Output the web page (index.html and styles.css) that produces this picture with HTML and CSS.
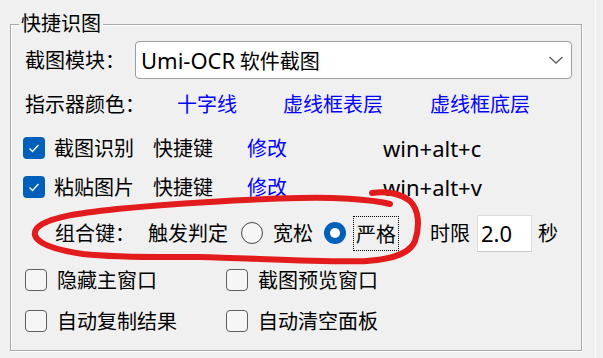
FILE: index.html
```html
<!DOCTYPE html>
<html lang="zh">
<head>
<meta charset="utf-8">
<link rel="stylesheet" href="styles.css">
</head>
<body>
<div class="page">
  <div class="main">
    <div class="group">
      <div class="legend">快捷识图</div>

      <div class="row r1">
        <span class="t lbl1">截图模块：</span>
        <div class="combo">
          <span class="t"><span class="latin">Umi-OCR</span> 软件截图</span>
          <svg class="chev" width="16" height="10" viewBox="0 0 16 10"><path d="M1.5 2 L8 8 L14.5 2" fill="none" stroke="#5f5f5f" stroke-width="1.4"/></svg>
        </div>
      </div>

      <div class="row r2">
        <span class="t c-ind">指示器颜色：</span>
        <span class="t link c-cross">十字线</span>
        <span class="t link c-top">虚线框表层</span>
        <span class="t link">虚线框底层</span>
      </div>

      <div class="row r3">
        <span class="cb on"><svg width="22" height="22" viewBox="0 0 22 22"><path d="M6.5 11.5 L9.5 14.5 L15.5 8" fill="none" stroke="#fff" stroke-width="1.3"/></svg></span>
        <span class="t c-name">截图识别</span>
        <span class="t c-key">快捷键</span>
        <span class="t link c-mod">修改</span>
        <span class="t latin">win+alt+c</span>
      </div>

      <div class="row r4">
        <span class="cb on"><svg width="22" height="22" viewBox="0 0 22 22"><path d="M6.5 11.5 L9.5 14.5 L15.5 8" fill="none" stroke="#fff" stroke-width="1.3"/></svg></span>
        <span class="t c-name">粘贴图片</span>
        <span class="t c-key">快捷键</span>
        <span class="t link c-mod">修改</span>
        <span class="t latin">win+alt+v</span>
      </div>

      <div class="row r5">
        <span class="t c-combo">组合键：</span>
        <span class="t c-trig">触发判定</span>
        <span class="radio"></span>
        <span class="t c-loose">宽松</span>
        <span class="radio sel"></span>
        <span class="focus t">严格</span>
        <span class="t c-limit">时限</span>
        <span class="input"><span class="latin">2.0</span></span>
        <span class="t c-sec">秒</span>
      </div>

      <div class="row r6">
        <span class="opt"><span class="cb"></span><span class="t">隐藏主窗口</span></span>
        <span class="opt"><span class="cb"></span><span class="t">截图预览窗口</span></span>
      </div>

      <div class="row r7">
        <span class="opt"><span class="cb"></span><span class="t">自动复制结果</span></span>
        <span class="opt"><span class="cb"></span><span class="t">自动清空面板</span></span>
      </div>
    </div>
  </div>
  <div class="strip"></div>

  <svg class="scribble" width="603" height="358" viewBox="0 0 603 358">
    <path d="M390 204 C370 199 330 197 300 198 C250 199 170 204 117 209 C80 213 48 217 37 228 C29 238 42 248 83 254 C120 258 170 257 200 257 C250 258 330 263 367 261 C395 259 410 253 415 241 C420 226 419 210 410 201 C400 193 385 191 372 193" fill="none" stroke="#e21c1c" stroke-width="6" stroke-linecap="round" stroke-linejoin="round"/>
  </svg>
</div>
</body>
</html>
```

FILE: styles.css
```css
html, body {
  margin: 0;
  padding: 0;
}

.page {
  position: relative;
  width: 603px;
  height: 358px;
  display: flex;
  overflow: hidden;
  background: #f0f0f0;
  font-family: "Noto Sans CJK SC", sans-serif;
  font-size: 20px;
  color: #000;
}

.main {
  width: 595px;
}

.strip {
  flex: 1;
  border-left: 1px solid #fafafa;
}

.group {
  position: relative;
  box-sizing: border-box;
  margin: 24px 0 0 10px;
  width: 572px;
  height: 327px;
  border: 1px solid #a9a9a9;
  box-shadow: inset 1px 1px 0 #fff, 1px 1px 0 #fff;
  padding-top: 16px;
}

.legend {
  position: absolute;
  left: 8px;
  top: -12px;
  padding: 0 2px;
  background: #f0f0f0;
  line-height: 20px;
}

.t {
  line-height: 20px;
  white-space: nowrap;
}

.latin {
  font-family: "Noto Sans", "Noto Sans CJK SC", sans-serif;
  font-size: 22px;
  line-height: 20px;
}

.link {
  color: #0000ff;
}

.row {
  display: flex;
  align-items: center;
  padding-left: 14px;
}

.r1 { height: 38px; }
.r2 { height: 50px; }
.r3 { height: 38px; padding-left: 12px; }
.r4 { height: 40px; padding-left: 12px; }
.r5 { height: 52px; padding-left: 44px; }
.r6 { height: 42px; }
.r7 { height: 40px; }

/* row 1 */
.lbl1 { width: 110px; }

.combo {
  box-sizing: border-box;
  width: 437px;
  height: 38px;
  display: flex;
  align-items: center;
  justify-content: space-between;
  padding: 0 7px 0 5px;
  background: #fff;
  border: 1px solid #9c9c9c;
  border-radius: 4px;
}

.chev { display: block; }

/* row 2 */
.c-ind { width: 152px; }
.c-cross { width: 106px; }
.c-top { width: 147px; }

/* checkboxes */
.cb {
  box-sizing: border-box;
  width: 22px;
  height: 22px;
  flex: none;
  border: 1px solid #5f5f5f;
  border-radius: 4px;
  background: #f6f6f6;
  margin-right: 10px;
}

.cb.on {
  border: none;
  background: #005fb8;
  margin-right: 9px;
}

.cb.on svg { display: block; }

.c-name { width: 99px; }
.c-key { width: 94px; }
.c-mod { width: 136px; }

/* row 5 */
.c-combo { width: 93px; }
.c-trig { margin-right: 13px; }

.radio {
  box-sizing: border-box;
  width: 22px;
  height: 22px;
  flex: none;
  border: 1px solid #444;
  border-radius: 50%;
  background: #f6f6f6;
}

.radio.sel {
  position: relative;
  border: none;
  background: #005fb8;
}

.radio.sel::after {
  content: "";
  position: absolute;
  left: 6px;
  top: 6px;
  width: 10px;
  height: 10px;
  border-radius: 50%;
  background: #fff;
}

.c-loose { margin: 0 11px 0 10px; }

.focus {
  margin-left: 7px;
  padding: 7px 2px 6px 2px;
  border: 1px dotted #000;
}

.c-limit { margin-left: 31px; margin-right: 7px; }

.input {
  box-sizing: border-box;
  width: 55px;
  height: 37px;
  display: flex;
  align-items: center;
  padding-left: 3px;
  background: #fff;
  border: 1px solid #dcdcdc;
  border-bottom-color: #c8c8c8;
}

.c-sec { margin-left: 6px; }

/* rows 6-7 */
.opt {
  width: 201px;
  display: flex;
  align-items: center;
}

.scribble {
  position: absolute;
  left: 0;
  top: 0;
  pointer-events: none;
}
```
